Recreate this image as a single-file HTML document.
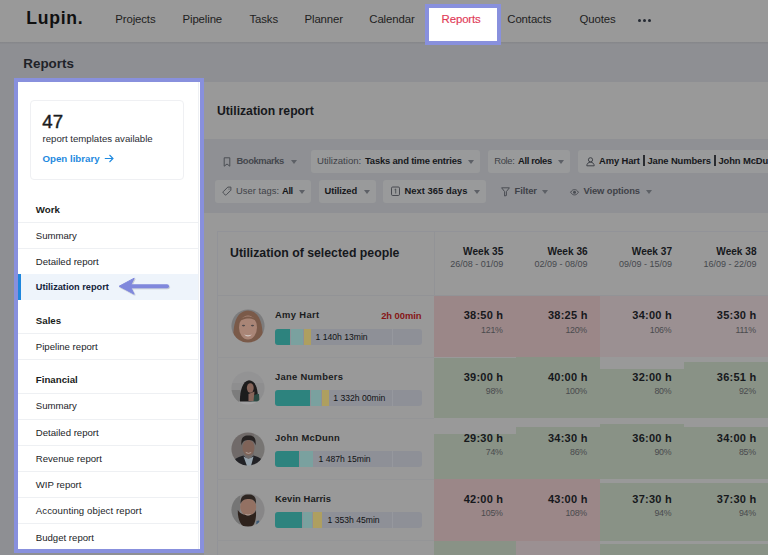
<!DOCTYPE html>
<html><head><meta charset="utf-8">
<style>
*{box-sizing:border-box;margin:0;padding:0}
html,body{width:768px;height:555px;overflow:hidden;background:#8e8f93;font-family:"Liberation Sans",sans-serif;position:relative}
.a{position:absolute}
svg.a{overflow:visible}
.t{position:absolute;white-space:nowrap;line-height:20px;height:20px}
.b{font-weight:700}
.navi{font-size:11.4px;color:#1e1e1e;letter-spacing:-0.12px}
.cl{font-size:9.4px;color:#3f4248;letter-spacing:-0.1px}
.wk{font-size:10.1px;color:#16181c}
.dt{font-size:9px;color:#45484d;margin-top:-1.3px}
.nm{font-size:9.4px;color:#1a1c20}
.tot{font-size:8.6px;color:#111214}
.hr{font-size:11px;color:#16181c;letter-spacing:0.25px}
.pc{font-size:8.8px;color:#4a4b4e;letter-spacing:-0.25px}
.av{border-radius:50%;overflow:hidden}
.sep{display:inline-block;width:1.6px;height:11.5px;background:#2a2c30;vertical-align:-2.3px;margin:0 2.9px 0 3.1px}
.av0{background:radial-gradient(ellipse 9px 12px at 50% 55%,#9c7a6c 0,#9c7a6c 80%,transparent 100%),linear-gradient(#6e5448,#6e5448)}
.av1{background:radial-gradient(circle at 50% 60%,#2a2a2a 0,#2a2a2a 40%,transparent 42%),#8e8e8e}
.av2{background:radial-gradient(ellipse 8px 10px at 50% 45%,#8a6f63 0,#8a6f63 80%,transparent 100%),linear-gradient(#7a7776,#7a7776)}
.av3{background:radial-gradient(ellipse 9px 11px at 50% 70%,#2b1f1a 0,#2b1f1a 90%,transparent 100%),#868483}
</style></head><body>

<div class="a" style="left:0;top:0;width:768px;height:42px;background:#999999"></div>
<div class="a" style="left:0;top:42px;width:768px;height:2px;background:linear-gradient(#858689,#8c8d91)"></div>
<div class="t b" style="left:26.3px;top:8px;font-size:17.6px;color:#101010;letter-spacing:0.7px">Lupin.</div>
<div class="t navi" style="left:115.3px;top:9px">Projects</div>
<div class="t navi" style="left:182.5px;top:9px">Pipeline</div>
<div class="t navi" style="left:249.5px;top:9px">Tasks</div>
<div class="t navi" style="left:304.5px;top:9px">Planner</div>
<div class="t navi" style="left:369.3px;top:9px">Calendar</div>
<div class="t navi" style="left:507.3px;top:9px">Contacts</div>
<div class="t navi" style="left:579.5px;top:9px">Quotes</div>
<div class="a" style="left:638px;top:18.6px;width:3px;height:3px;border-radius:50%;background:#252a33"></div>
<div class="a" style="left:643px;top:18.6px;width:3px;height:3px;border-radius:50%;background:#252a33"></div>
<div class="a" style="left:648px;top:18.6px;width:3px;height:3px;border-radius:50%;background:#252a33"></div>
<div class="a" style="left:425.3px;top:3.6px;width:75.5px;height:41.4px;border:4px solid #8890dd;background:#fff"></div>
<div class="t navi" style="left:441.6px;top:9px;color:#df3a58;-webkit-text-stroke:0.15px #df3a58">Reports</div>
<div class="t b" style="left:23.3px;top:54px;font-size:13.4px;color:#1f2228">Reports</div>

<div class="a" style="left:204px;top:82px;width:564px;height:56.5px;background:#999999"></div>
<div class="a" style="left:204px;top:138.5px;width:564px;height:74px;background:#8f9094"></div>
<div class="a" style="left:204px;top:212.5px;width:564px;height:343px;background:#999999"></div>
<div class="t b" style="left:217px;top:101px;font-size:12.2px;color:#16181c">Utilization report</div>
<div class="a" style="left:311px;top:150px;width:169px;height:22.5px;border-radius:3px;background:#999a9b"></div>
<div class="a" style="left:488px;top:150px;width:82px;height:22.5px;border-radius:3px;background:#999a9b"></div>
<div class="a" style="left:578px;top:150px;width:200px;height:22.5px;border-radius:3px;background:#999a9b"></div>
<div class="a" style="left:215px;top:180px;width:96px;height:22.5px;border-radius:3px;background:#999a9b"></div>
<div class="a" style="left:319px;top:180px;width:57px;height:22.5px;border-radius:3px;background:#999a9b"></div>
<div class="a" style="left:383px;top:180px;width:103px;height:22.5px;border-radius:3px;background:#999a9b"></div>
<svg class="a" style="left:223px;top:156.5px" width="8" height="10" viewBox="0 0 8 10"><path d="M1.2 0.8h5.6v8.4L4 7 1.2 9.2z" fill="none" stroke="#4a4d53" stroke-width="1" stroke-linejoin="round"/></svg>
<div class="t b cl" style="left:236.5px;top:151.1px;color:#44474d;letter-spacing:-0.42px">Bookmarks</div>
<div class="a" style="left:291px;top:160px;width:0;height:0;border-left:3.5px solid transparent;border-right:3.5px solid transparent;border-top:4px solid #5d6066"></div>
<div class="t cl" style="left:317px;top:151.1px;font-size:9.6px;letter-spacing:0px">Utilization:</div>
<div class="t b cl" style="left:365px;top:151.1px;color:#16181c;letter-spacing:-0.16px">Tasks and time entries</div>
<div class="a" style="left:468px;top:160px;width:0;height:0;border-left:3.5px solid transparent;border-right:3.5px solid transparent;border-top:4px solid #5d6066"></div>
<div class="t cl" style="left:494.3px;top:151.1px;letter-spacing:-0.33px">Role:</div>
<div class="t b cl" style="left:518px;top:151.1px;color:#16181c;letter-spacing:-0.35px">All roles</div>
<div class="a" style="left:558px;top:160px;width:0;height:0;border-left:3.5px solid transparent;border-right:3.5px solid transparent;border-top:4px solid #5d6066"></div>
<svg class="a" style="left:585.5px;top:157px" width="9" height="9.5" viewBox="0 0 9 9.5"><circle cx="4.5" cy="2.8" r="2.1" fill="none" stroke="#3f4248" stroke-width="1"/><path d="M0.8 8.8c0-2.2 1.6-3.6 3.7-3.6s3.7 1.4 3.7 3.6z" fill="none" stroke="#3f4248" stroke-width="1" stroke-linejoin="round"/></svg>
<div class="t b cl" style="left:599px;top:151.1px;color:#16181c">Amy Hart<i class="sep"></i>Jane Numbers<i class="sep"></i>John McDunn<i class="sep"></i>Kevin Harris</div>
<svg class="a" style="left:222px;top:186px" width="10" height="10" viewBox="0 0 10 10"><path d="M1.3 5.6l4.5-4.5h3.1v3.1l-4.5 4.5a1 1 0 0 1-1.4 0l-1.7-1.7a1 1 0 0 1 0-1.4z" fill="none" stroke="#4a4d53" stroke-width="1" stroke-linejoin="round"/><circle cx="7" cy="3" r="0.6" fill="#4a4d53"/></svg>
<div class="t cl" style="left:236px;top:181.1px;letter-spacing:0.03px">User tags:</div>
<div class="t b cl" style="left:282px;top:181.1px;color:#16181c;letter-spacing:-0.39px">All</div>
<div class="a" style="left:299px;top:190px;width:0;height:0;border-left:3.5px solid transparent;border-right:3.5px solid transparent;border-top:4px solid #5d6066"></div>
<div class="t b cl" style="left:324.5px;top:181.1px;color:#16181c">Utilized</div>
<div class="a" style="left:363.5px;top:190px;width:0;height:0;border-left:3.5px solid transparent;border-right:3.5px solid transparent;border-top:4px solid #5d6066"></div>
<svg class="a" style="left:391px;top:186px" width="9" height="10" viewBox="0 0 9 10"><rect x="0.5" y="1" width="8" height="8.5" rx="1.2" fill="none" stroke="#3f4248" stroke-width="0.9"/><path d="M3.6 3.7l1.1-0.7v4.5" fill="none" stroke="#3f4248" stroke-width="0.8"/></svg>
<div class="t b cl" style="left:404.5px;top:181.1px;color:#16181c;letter-spacing:0.03px">Next 365 days</div>
<div class="a" style="left:473.5px;top:190px;width:0;height:0;border-left:3.5px solid transparent;border-right:3.5px solid transparent;border-top:4px solid #5d6066"></div>
<svg class="a" style="left:501px;top:187px" width="9" height="9.5" viewBox="0 0 9 9.5"><path d="M0.6 0.8h7.8L5.4 4.6v3.9L3.6 9V4.6z" fill="none" stroke="#4a4d53" stroke-width="1" stroke-linejoin="round"/></svg>
<div class="t b cl" style="left:514.5px;top:181.1px;color:#3f4248">Filter</div>
<div class="a" style="left:542px;top:190px;width:0;height:0;border-left:3.5px solid transparent;border-right:3.5px solid transparent;border-top:4px solid #5d6066"></div>
<svg class="a" style="left:570px;top:188.5px" width="9" height="6.5" viewBox="0 0 9 6.5"><path d="M0.6 3.25C1.8 1.3 3 0.6 4.5 0.6s2.7 0.7 3.9 2.65C7.2 5.2 6 5.9 4.5 5.9S1.8 5.2 0.6 3.25z" fill="none" stroke="#4a4d53" stroke-width="1"/><circle cx="4.5" cy="3.25" r="1.5" fill="#4a4d53"/></svg>
<div class="t b cl" style="left:583.5px;top:181.1px;color:#3f4248">View options</div>
<div class="a" style="left:646px;top:190px;width:0;height:0;border-left:3.5px solid transparent;border-right:3.5px solid transparent;border-top:4px solid #5d6066"></div>
<div class="a" style="left:217px;top:231px;width:560px;height:330px;background:#999999;border:1px solid #929398"></div>
<div class="a" style="left:217px;top:295px;width:551px;height:1px;background:#929396"></div>
<div class="a" style="left:434px;top:231px;width:1px;height:65px;background:#929396"></div>
<div class="t b" style="left:230px;top:242.8px;font-size:12.3px;color:#16181c">Utilization of selected people</div>
<div class="t b wk" style="right:264.7px;top:242px;">Week 35</div>
<div class="t dt" style="right:264.7px;top:255.5px;">26/08 - 01/09</div>
<div class="t b wk" style="right:180.39999999999998px;top:242px;">Week 36</div>
<div class="t dt" style="right:180.39999999999998px;top:255.5px;">02/09 - 08/09</div>
<div class="t b wk" style="right:96px;top:242px;">Week 37</div>
<div class="t dt" style="right:96px;top:255.5px;">09/09 - 15/09</div>
<div class="t b wk" style="right:11.5px;top:242px;">Week 38</div>
<div class="t dt" style="right:11.5px;top:255.5px;">16/09 - 22/09</div>
<div class="a" style="left:217px;top:356.70px;width:217px;height:1px;background:#949597"></div>
<svg class="a" style="left:231px;top:308.6px" width="34" height="34" viewBox="0 0 34 34"><defs><clipPath id="c0"><circle cx="17" cy="17" r="16.6"/></clipPath><filter id="f0"><feGaussianBlur stdDeviation="0.6"/></filter></defs><g clip-path="url(#c0)"><g filter="url(#f0)"><rect width="34" height="34" fill="#7c7c7d"/><path d="M2.5 34 C1.5 18 4 2 17 1.5 C30 2 32.5 18 31.5 34 Z" fill="#7a5a4a"/><ellipse cx="17" cy="18.5" rx="9" ry="12" fill="#a98576"/><path d="M7.5 14 C9 6 24 5 27 14 C24 8 11 8 7.5 14Z" fill="#7a5a4a"/><ellipse cx="12.5" cy="16.6" rx="1.6" ry="0.8" fill="#504a4c"/><ellipse cx="21.5" cy="16.6" rx="1.6" ry="0.8" fill="#504a4c"/><path d="M13 25.5 Q17 29.5 21 25.5 Q17 27 13 25.5Z" fill="#d2c8c4"/></g></g></svg>
<div class="t b nm" style="left:275px;top:305.40000000000003px;letter-spacing:0.35px">Amy Hart</div>
<div class="t b nm" style="left:381.2px;top:305.6px;color:#861515;letter-spacing:-0.05px">2h 00min</div>
<div class="a" style="left:275px;top:328.8px;width:147px;height:16px;border-radius:3px;background:#8e9097;overflow:hidden">
<div class="a" style="left:0px;top:0;width:15px;height:16px;background:#2d837e"></div>
<div class="a" style="left:15.600000000000023px;top:0;width:12.599999999999966px;height:16px;background:#7aa19f"></div>
<div class="a" style="left:29px;top:0;width:7px;height:16px;background:#ae9f60"></div>
<div class="a" style="left:117px;top:0;width:1px;height:16px;background:#96989e"></div>
</div>
<div class="t tot" style="left:315.5px;top:326.8px;">1 140h 13min</div>
<div class="a" style="left:434px;top:295.80px;width:82px;height:61.20px;background:#9b8788"></div>
<div class="t b hr" style="right:264.7px;top:305.3px;">38:50 h</div>
<div class="t pc" style="right:265.4px;top:319.8px;">121%</div>
<div class="a" style="left:516px;top:295.80px;width:84px;height:61.20px;background:#9b8788"></div>
<div class="t b hr" style="right:180.39999999999998px;top:305.3px;">38:25 h</div>
<div class="t pc" style="right:181.10000000000002px;top:319.8px;">120%</div>
<div class="a" style="left:600px;top:295.80px;width:84.4px;height:61.20px;background:#9b9092"></div>
<div class="t b hr" style="right:96px;top:305.3px;">34:00 h</div>
<div class="t pc" style="right:96.70000000000005px;top:319.8px;">106%</div>
<div class="a" style="left:684.4px;top:295.80px;width:84px;height:61.20px;background:#9b9092"></div>
<div class="t b hr" style="right:11.5px;top:305.3px;">35:30 h</div>
<div class="t pc" style="right:12.200000000000045px;top:319.8px;">111%</div>
<div class="a" style="left:217px;top:417.90px;width:217px;height:1px;background:#949597"></div>
<svg class="a" style="left:231px;top:371.1px" width="34" height="34" viewBox="0 0 34 34"><defs><clipPath id="c1"><circle cx="17" cy="17" r="16.6"/></clipPath><filter id="f1"><feGaussianBlur stdDeviation="0.6"/></filter></defs><g clip-path="url(#c1)"><g filter="url(#f1)"><rect width="34" height="34" fill="#8e8e8f"/><rect width="34" height="12" fill="#939394"/><path d="M0 19 L9.5 19 L10.5 32 L0 32Z" fill="#7b7b7c"/><path d="M9 31 C8.5 22 11 10 18 9.3 C25 9.5 27.5 19 26.8 31 Z" fill="#1f1d1e"/><ellipse cx="19.3" cy="17" rx="3.4" ry="4.8" fill="#86655a"/><path d="M20.5 31 C21 25 24 22.5 28 23 L28.5 31Z" fill="#2c4a42"/><path d="M17.5 23 L23.5 20.5 L22.5 30 L17.5 30Z" fill="#86655a"/><rect x="8" y="30.5" width="26" height="4" fill="#a2a2a3"/></g></g></svg>
<div class="t b nm" style="left:275px;top:366.6px;letter-spacing:0.3px">Jane Numbers</div>
<div class="a" style="left:275px;top:390.0px;width:147px;height:16px;border-radius:3px;background:#8e9097;overflow:hidden">
<div class="a" style="left:0px;top:0;width:35px;height:16px;background:#2d837e"></div>
<div class="a" style="left:35.60000000000002px;top:0;width:10.899999999999977px;height:16px;background:#7aa19f"></div>
<div class="a" style="left:47.39999999999998px;top:0;width:6.400000000000034px;height:16px;background:#ae9f60"></div>
<div class="a" style="left:117px;top:0;width:1px;height:16px;background:#96989e"></div>
</div>
<div class="t tot" style="left:333.3px;top:388.0px;">1 332h 00min</div>
<div class="a" style="left:434px;top:358.22px;width:82px;height:59.98px;background:#899286"></div>
<div class="t b hr" style="right:264.7px;top:366.5px;">39:00 h</div>
<div class="t pc" style="right:265.4px;top:381.0px;">98%</div>
<div class="a" style="left:516px;top:357.00px;width:84px;height:61.20px;background:#899286"></div>
<div class="t b hr" style="right:180.39999999999998px;top:366.5px;">40:00 h</div>
<div class="t pc" style="right:181.10000000000002px;top:381.0px;">100%</div>
<div class="a" style="left:600px;top:369.24px;width:84.4px;height:48.96px;background:#899286"></div>
<div class="t b hr" style="right:96px;top:366.5px;">32:00 h</div>
<div class="t pc" style="right:96.70000000000005px;top:381.0px;">80%</div>
<div class="a" style="left:684.4px;top:361.90px;width:84px;height:56.30px;background:#899286"></div>
<div class="t b hr" style="right:11.5px;top:366.5px;">36:51 h</div>
<div class="t pc" style="right:12.200000000000045px;top:381.0px;">92%</div>
<div class="a" style="left:217px;top:479.10px;width:217px;height:1px;background:#949597"></div>
<svg class="a" style="left:231px;top:431.7px" width="34" height="34" viewBox="0 0 34 34"><defs><clipPath id="c2"><circle cx="17" cy="17" r="16.6"/></clipPath><filter id="f2"><feGaussianBlur stdDeviation="0.6"/></filter></defs><g clip-path="url(#c2)"><g filter="url(#f2)"><rect width="34" height="34" fill="#6f6b69"/><rect x="23" y="0" width="11" height="34" fill="#777473"/><ellipse cx="17.5" cy="15.8" rx="6" ry="7.8" fill="#7f6459"/><path d="M10.5 13.5 C9.5 5 13 3.5 17.5 3.5 C22 3.5 25.5 5 24.5 13.5 C23.5 9 21 8 17.5 8 C14 8 11.5 9 10.5 13.5Z" fill="#262222"/><path d="M0 34 C1 28 6 25 12.5 23.5 L17.5 28 L22.5 23.5 C29 25 33 28 34 34Z" fill="#222428"/><path d="M12.5 24.5 L16 34 L20 34 L22.5 24.5 L17.5 27Z" fill="#95a2ac"/><path d="M14.8 20.5 Q17.5 22.3 20.2 20.5" stroke="#b9aaa3" stroke-width="0.9" fill="none"/></g></g></svg>
<div class="t b nm" style="left:275px;top:427.80000000000007px;letter-spacing:0.28px">John McDunn</div>
<div class="a" style="left:275px;top:451.20000000000005px;width:147px;height:16px;border-radius:3px;background:#8e9097;overflow:hidden">
<div class="a" style="left:0px;top:0;width:24px;height:16px;background:#2d837e"></div>
<div class="a" style="left:24.600000000000023px;top:0;width:13.899999999999977px;height:16px;background:#7aa19f"></div>
<div class="a" style="left:117px;top:0;width:1px;height:16px;background:#96989e"></div>
</div>
<div class="t tot" style="left:318.5px;top:449.20000000000005px;">1 487h 15min</div>
<div class="a" style="left:434px;top:434.11px;width:82px;height:45.29px;background:#899286"></div>
<div class="t b hr" style="right:264.7px;top:427.70000000000005px;">29:30 h</div>
<div class="t pc" style="right:265.4px;top:442.20000000000005px;">74%</div>
<div class="a" style="left:516px;top:426.77px;width:84px;height:52.63px;background:#899286"></div>
<div class="t b hr" style="right:180.39999999999998px;top:427.70000000000005px;">34:30 h</div>
<div class="t pc" style="right:181.10000000000002px;top:442.20000000000005px;">86%</div>
<div class="a" style="left:600px;top:424.32px;width:84.4px;height:55.08px;background:#899286"></div>
<div class="t b hr" style="right:96px;top:427.70000000000005px;">36:00 h</div>
<div class="t pc" style="right:96.70000000000005px;top:442.20000000000005px;">90%</div>
<div class="a" style="left:684.4px;top:427.38px;width:84px;height:52.02px;background:#899286"></div>
<div class="t b hr" style="right:11.5px;top:427.70000000000005px;">34:00 h</div>
<div class="t pc" style="right:12.200000000000045px;top:442.20000000000005px;">85%</div>
<div class="a" style="left:217px;top:540.30px;width:217px;height:1px;background:#949597"></div>
<svg class="a" style="left:231px;top:492.5px" width="34" height="34" viewBox="0 0 34 34"><defs><clipPath id="c3"><circle cx="17" cy="17" r="16.6"/></clipPath><filter id="f3"><feGaussianBlur stdDeviation="0.6"/></filter></defs><g clip-path="url(#c3)"><g filter="url(#f3)"><rect width="34" height="34" fill="#878687"/><rect x="0" y="0" width="9" height="34" fill="#747475"/><ellipse cx="17.2" cy="14" rx="8" ry="9" fill="#937163"/><path d="M9.5 11 C9 3 13 1.5 17.5 1.5 C22 1.5 25.5 3 25 11 C23.5 7 21 6 17.5 6 C14 6 11 7 9.5 11Z" fill="#2e2723"/><path d="M6.8 17 C6.5 28 11 35 17 35 C23 35 25.5 28 25 17 C23.5 21 21 22 17 22 C13 22 9 21 6.8 17Z" fill="#2d221d"/><path d="M13.5 21 Q17 24 20.5 21 Q17 22.3 13.5 21Z" fill="#cdbfb8"/><path d="M25 34 L25.5 28 L28 27.5 L29.5 34Z" fill="#3d5a74"/></g></g></svg>
<div class="t b nm" style="left:275px;top:489.00000000000006px;letter-spacing:0.07px">Kevin Harris</div>
<div class="a" style="left:275px;top:512.4000000000001px;width:147px;height:16px;border-radius:3px;background:#8e9097;overflow:hidden">
<div class="a" style="left:0px;top:0;width:27px;height:16px;background:#2d837e"></div>
<div class="a" style="left:27.600000000000023px;top:0;width:9.699999999999989px;height:16px;background:#7aa19f"></div>
<div class="a" style="left:38.19999999999999px;top:0;width:9.300000000000011px;height:16px;background:#ae9f60"></div>
<div class="a" style="left:117px;top:0;width:1px;height:16px;background:#96989e"></div>
</div>
<div class="t tot" style="left:327.5px;top:510.4000000000001px;">1 353h 45min</div>
<div class="a" style="left:434px;top:479.40px;width:82px;height:61.20px;background:#9b8788"></div>
<div class="t b hr" style="right:264.7px;top:488.90000000000003px;">42:00 h</div>
<div class="t pc" style="right:265.4px;top:503.4000000000001px;">105%</div>
<div class="a" style="left:516px;top:479.40px;width:84px;height:61.20px;background:#9b8788"></div>
<div class="t b hr" style="right:180.39999999999998px;top:488.90000000000003px;">43:00 h</div>
<div class="t pc" style="right:181.10000000000002px;top:503.4000000000001px;">108%</div>
<div class="a" style="left:600px;top:483.07px;width:84.4px;height:57.53px;background:#899286"></div>
<div class="t b hr" style="right:96px;top:488.90000000000003px;">37:30 h</div>
<div class="t pc" style="right:96.70000000000005px;top:503.4000000000001px;">94%</div>
<div class="a" style="left:684.4px;top:483.07px;width:84px;height:57.53px;background:#899286"></div>
<div class="t b hr" style="right:11.5px;top:488.90000000000003px;">37:30 h</div>
<div class="t pc" style="right:12.200000000000045px;top:503.4000000000001px;">94%</div>
<div class="a" style="left:434px;top:540.60px;width:82px;height:61.20px;background:#899286"></div>
<div class="a" style="left:516px;top:540.60px;width:84px;height:61.20px;background:#9b9092"></div>
<div class="a" style="left:600px;top:543.66px;width:84.4px;height:58.14px;background:#899286"></div>
<div class="a" style="left:684.4px;top:543.66px;width:84px;height:58.14px;background:#899286"></div>

<div class="a" style="left:14px;top:78px;width:190px;height:475px;border:4px solid #8890dd;background:#fff"></div>
<div class="a" style="left:198px;top:82px;width:1px;height:467px;background:#eef0f3"></div>
<div class="a" style="left:30px;top:100px;width:154px;height:80px;border:1px solid #eff0f3;border-radius:4px"></div>
<div class="t " style="left:42.3px;top:112px;font-size:18.6px;color:#1a1c20;-webkit-text-stroke:0.45px #1a1c20">47</div>
<div class="t " style="left:42.5px;top:128.5px;font-size:9.65px;color:#2a2d33">report templates available</div>
<div class="t b" style="left:42.5px;top:149px;font-size:9.7px;color:#1f8ae0">Open library</div>
<svg class="a" style="left:104px;top:154px" width="10" height="9" viewBox="0 0 10 9"><path d="M0.8 4.5H9M5.5 1L9 4.5L5.5 8" fill="none" stroke="#1f8ae0" stroke-width="1.1"/></svg>
<div class="a" style="left:18px;top:221.6px;width:180px;height:1px;background:#eef0f3"></div>
<div class="a" style="left:18px;top:248px;width:180px;height:1px;background:#eef0f3"></div>
<div class="a" style="left:18px;top:332.6px;width:180px;height:1px;background:#eef0f3"></div>
<div class="a" style="left:18px;top:358.6px;width:180px;height:1px;background:#eef0f3"></div>
<div class="a" style="left:18px;top:392.6px;width:180px;height:1px;background:#eef0f3"></div>
<div class="a" style="left:18px;top:418.6px;width:180px;height:1px;background:#eef0f3"></div>
<div class="a" style="left:18px;top:444.8px;width:180px;height:1px;background:#eef0f3"></div>
<div class="a" style="left:18px;top:471px;width:180px;height:1px;background:#eef0f3"></div>
<div class="a" style="left:18px;top:497.3px;width:180px;height:1px;background:#eef0f3"></div>
<div class="a" style="left:18px;top:523.4px;width:180px;height:1px;background:#eef0f3"></div>
<div class="a" style="left:18px;top:274px;width:180px;height:26px;background:#eef4fb"></div>
<div class="a" style="left:18px;top:274px;width:3px;height:26px;background:#1e86dd"></div>
<div class="t b" style="left:35.8px;top:200.20000000000002px;font-size:9.7px;color:#1a1c20">Work</div>
<div class="t " style="left:35.8px;top:226.2px;font-size:9.6px;color:#222428">Summary</div>
<div class="t " style="left:35.8px;top:252.2px;font-size:9.6px;color:#222428">Detailed report</div>
<div class="t b" style="left:35.8px;top:276.8px;font-size:9.2px;color:#14233a">Utilization report</div>
<div class="t b" style="left:35.8px;top:311.0px;font-size:9.7px;color:#1a1c20">Sales</div>
<div class="t " style="left:35.8px;top:336.7px;font-size:9.6px;color:#222428">Pipeline report</div>
<div class="t b" style="left:35.8px;top:370.3px;font-size:9.7px;color:#1a1c20">Financial</div>
<div class="t " style="left:35.8px;top:396.3px;font-size:9.6px;color:#222428">Summary</div>
<div class="t " style="left:35.8px;top:422.5px;font-size:9.6px;color:#222428">Detailed report</div>
<div class="t " style="left:35.8px;top:448.7px;font-size:9.6px;color:#222428">Revenue report</div>
<div class="t " style="left:35.8px;top:474.9px;font-size:9.6px;color:#222428">WIP report</div>
<div class="t " style="left:35.8px;top:501.09999999999997px;font-size:9.6px;color:#222428;letter-spacing:0.1px">Accounting object report</div>
<div class="t " style="left:35.8px;top:527.7px;font-size:9.6px;color:#222428">Budget report</div>
<svg class="a" style="left:116px;top:276px" width="58" height="22" viewBox="0 0 58 22"><defs><filter id="ash" x="-20%" y="-50%" width="140%" height="200%"><feDropShadow dx="0.6" dy="0.8" stdDeviation="0.6" flood-color="#000" flood-opacity="0.25"/></filter></defs><g filter="url(#ash)" fill="#8088dc"><path d="M12 10.2H51" stroke="#8088dc" stroke-width="4" stroke-linecap="round"/><path d="M3.2 10.2L18.2 2.2L14.2 10.2L18.2 18.2Z" stroke="#8088dc" stroke-width="1" stroke-linejoin="round"/></g></svg>

</body></html>
